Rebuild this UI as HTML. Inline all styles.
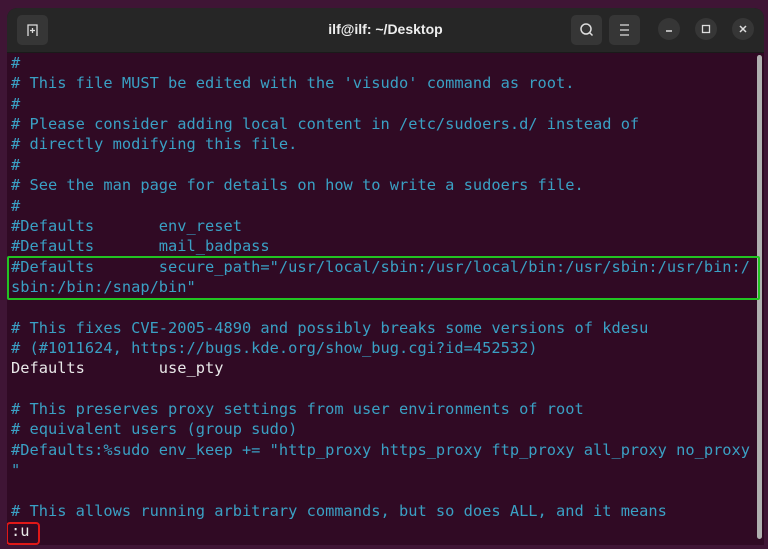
<!DOCTYPE html>
<html><head><style>
body{margin:0;width:768px;height:549px;background:#3f1535;overflow:hidden;position:relative;font-family:"Liberation Sans",sans-serif}
.win{position:absolute;left:7px;top:8px;width:757px;height:537px;background:#300a24;border-radius:10px 10px 0 0;overflow:hidden}
.hdr{position:absolute;left:0;top:0;width:757px;height:44px;background:#262626;border-bottom:1px solid #1a1a1a}
.title{position:absolute;left:0;right:0;top:13px;text-align:center;color:#eee;font-weight:bold;font-size:14px}
.btn{position:absolute;top:7px;width:31px;height:30px;background:#363636;border-radius:5px}
.circ{position:absolute;top:10px;width:22px;height:22px;border-radius:50%;background:#363636}
pre{position:absolute;left:4px;top:45px;margin:0;font-family:"DejaVu Sans Mono",monospace;font-size:15.35px;line-height:20.36px;color:#3aa0c4}
.w{color:#e8e8e8}
.sb{position:absolute;left:750px;top:47px;width:5px;height:484px;background:#b0b0b0;border-radius:3px}
.g{position:absolute;left:0px;top:248px;width:749px;height:40px;border:2px solid #22c322;border-radius:2px}
.r{position:absolute;left:-1px;top:514px;width:30px;height:19px;border:2px solid #e01818;border-radius:4px}
</style></head><body>
<div class="win">
<div class="hdr">
<div class="btn" style="left:10px"><svg width="31" height="30"><path d="M11 21V10h9v11M15.5 13v5M13 15.5h5" stroke="#ddd" stroke-width="1.3" fill="none"/></svg></div>
<div class="title">ilf@ilf: ~/Desktop</div>
<div class="btn" style="left:564px"><svg width="31" height="30"><circle cx="15" cy="14" r="5" stroke="#ddd" stroke-width="1.5" fill="none"/><path d="M18.5 17.5l3 3" stroke="#ddd" stroke-width="1.5"/></svg></div>
<div class="btn" style="left:602px"><svg width="31" height="30"><path d="M11 10h9M11 15h9M11 20h9" stroke="#ddd" stroke-width="1.3"/></svg></div>
<div class="circ" style="left:651px"><svg width="22" height="22"><path d="M8 13h6" stroke="#ddd" stroke-width="1.5"/></svg></div>
<div class="circ" style="left:688px"><svg width="22" height="22"><rect x="7.5" y="7.5" width="7" height="7" stroke="#ddd" stroke-width="1.3" fill="none"/></svg></div>
<div class="circ" style="left:725px"><svg width="22" height="22"><path d="M8 8l6 6M14 8l-6 6" stroke="#ddd" stroke-width="1.5"/></svg></div>
</div>
<pre>#
# This file MUST be edited with the 'visudo' command as root.
#
# Please consider adding local content in /etc/sudoers.d/ instead of
# directly modifying this file.
#
# See the man page for details on how to write a sudoers file.
#
#Defaults       env_reset
#Defaults       mail_badpass
#Defaults       secure_path="/usr/local/sbin:/usr/local/bin:/usr/sbin:/usr/bin:/
sbin:/bin:/snap/bin"

# This fixes CVE-2005-4890 and possibly breaks some versions of kdesu
# (#1011624, https://bugs.kde.org/show_bug.cgi?id=452532)
<span class="w">Defaults        use_pty</span>

# This preserves proxy settings from user environments of root
# equivalent users (group sudo)
#Defaults:%sudo env_keep += "http_proxy https_proxy ftp_proxy all_proxy no_proxy
"

# This allows running arbitrary commands, but so does ALL, and it means
<span class="w">:u</span></pre>
<div class="sb"></div>
<div class="g"></div>
<div class="r"></div>
</div>
</body></html>
